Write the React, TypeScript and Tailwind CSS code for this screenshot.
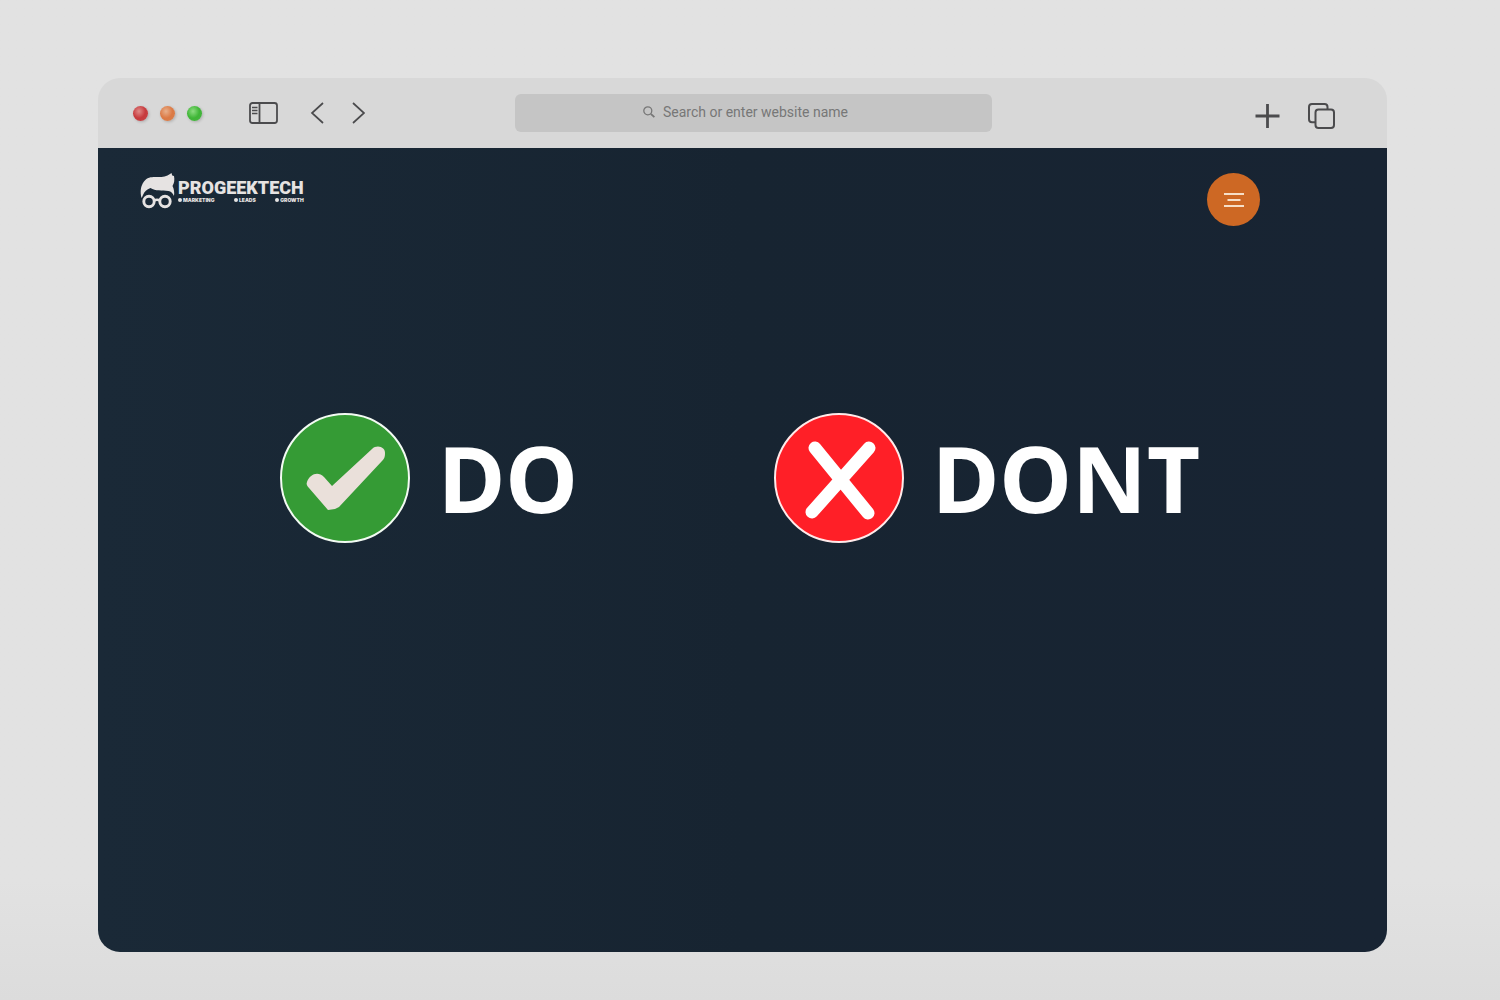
import type { ReactNode } from "react";

function TrafficLights() {
  return (
    <div className="flex gap-3">
      <button
        type="button"
        aria-label="Close"
        className="size-[15px] rounded-full bg-radial-[at_40%_35%] from-[#e08a88] via-[#c73a3d] to-[#c2494c] shadow-[1px_1px_3px_rgba(0,0,0,0.2)]"
      />
      <button
        type="button"
        aria-label="Minimize"
        className="size-[15px] rounded-full bg-radial-[at_40%_35%] from-[#e8b08c] via-[#dc7a45] to-[#d4804f] shadow-[1px_1px_3px_rgba(0,0,0,0.2)]"
      />
      <button
        type="button"
        aria-label="Zoom"
        className="size-[15px] rounded-full bg-radial-[at_40%_35%] from-[#8cdc80] via-[#3fb636] to-[#4bb046] shadow-[1px_1px_3px_rgba(0,0,0,0.2)]"
      />
    </div>
  );
}

function Toolbar() {
  return (
    <header className="flex h-[70px] items-center bg-[#d8d8d8] pr-[52px] pl-[35px] text-[#4b4b4d]">
      <TrafficLights />
      <button type="button" aria-label="Sidebar" className="ml-[46px]">
        <svg width="30" height="22" viewBox="0 0 30 22" fill="none" stroke="currentColor" strokeWidth="1.8">
          <rect x="2" y="1" width="27" height="20" rx="2.5" />
          <path d="M11.500 1v20" />
          <path d="M4 5.500h5.500M4 8.500h5.500M4 11.500h5.500" strokeWidth="1.500" />
        </svg>
      </button>
      <button type="button" aria-label="Back" className="ml-8">
        <svg width="14" height="22" viewBox="0 0 14 22" fill="none" stroke="currentColor" strokeWidth="1.7">
          <path d="M13 1 2 11l11 10" />
        </svg>
      </button>
      <button type="button" aria-label="Forward" className="ml-7">
        <svg width="14" height="22" viewBox="0 0 14 22" fill="none" stroke="currentColor" strokeWidth="1.7">
          <path d="m1 1 11 10L1 21" />
        </svg>
      </button>
      <label className="mr-[263px] ml-[149px] flex h-[38px] flex-1 items-center justify-center gap-2 rounded-md bg-[#c5c5c5] pr-4 pb-[2px] text-[#777777]">
        <svg width="12" height="12" viewBox="0 0 12 12" fill="none" stroke="currentColor" strokeWidth="1.3">
          <circle cx="4.8" cy="4.8" r="4" />
          <path d="m7.8 7.8 3.6 3.4" strokeWidth="1.8" />
        </svg>
        <input
          type="text"
          aria-label="Address"
          placeholder="Search or enter website name"
          className="field-sizing-content bg-transparent font-['Roboto',sans-serif] text-sm outline-none placeholder:text-[#777777]"
        />
      </label>
      <div className="flex gap-7 pt-[6px]">
        <button type="button" aria-label="New tab">
          <svg width="25" height="26" viewBox="0 0 25 26" fill="none" stroke="currentColor" strokeWidth="2.8">
            <path d="M12.5 1v24M.5 13h24" />
          </svg>
        </button>
        <button type="button" aria-label="Show tabs">
          <svg width="27" height="26" viewBox="0 0 27 26" fill="none" stroke="currentColor" strokeWidth="2">
            <path d="M7 19.3H4a3 3 0 0 1-3-3V4a3 3 0 0 1 3-3h12.500a3 3 0 0 1 3 3v2.500" />
            <rect x="7.500" y="6.500" width="18.500" height="18.500" rx="3" />
          </svg>
        </button>
      </div>
    </header>
  );
}

function Logo() {
  return (
    <a href="#" className="flex items-end gap-[2px] text-[#e6e3e2]">
      <svg width="36" height="36" viewBox="0 0 36 36" fill="none">
        <path
          d="M1.500 25C0 19 .5 13 4 8.500 7 4.500 11 4 15 4c5 0 11 .5 15-3l1.500-1 .7 2.500L34 3c.8 4 .2 7-1.500 10 1.500 3 2 6 1.500 10-1.500-3-3-4.500-5.500-5-7-.5-13 0-18-3-4 1.500-6 3.500-7 6-.8 1.500-1 2.500-2 4z"
          fill="currentColor"
        />
        <circle cx="9" cy="28.500" r="5.200" stroke="currentColor" strokeWidth="2.900" />
        <circle cx="25" cy="28.500" r="5.200" stroke="currentColor" strokeWidth="2.900" />
        <path d="M14 27.500q3-1.500 6 0" stroke="currentColor" strokeWidth="2.400" />
      </svg>
      <span className="flex flex-col pb-[6px]">
        <span className="font-['Roboto',sans-serif] text-lg leading-[18px] font-black">PROGEEKTECH</span>
        <span className="flex justify-between font-['Inter',sans-serif] text-[5px] leading-[6px] font-black">
          <span className="flex items-center gap-px">
            <i className="size-1 rounded-full bg-current" />
            MARKETING
          </span>
          <span className="flex items-center gap-px">
            <i className="size-1 rounded-full bg-current" />
            LEADS
          </span>
          <span className="flex items-center gap-px">
            <i className="size-1 rounded-full bg-current" />
            GROWTH
          </span>
        </span>
      </span>
    </a>
  );
}

function Choice({ label, children }: { label: string; children: ReactNode }) {
  return (
    <div className="flex items-center gap-7">
      <svg width="130" height="130" viewBox="0 0 130 130" fill="none" aria-hidden="true">
        {children}
      </svg>
      <h2 className="font-['Noto_Sans',sans-serif] text-[92px] leading-[130px] font-bold text-white">{label}</h2>
    </div>
  );
}

export default function App() {
  return (
    <div className="flex min-h-screen flex-col bg-linear-to-b from-[#e2e2e2] from-88% to-[#dcdcdc] pt-[78px] pr-[113px] pb-12 pl-[98px]">
      <div className="flex flex-1 flex-col overflow-hidden rounded-[22px]">
        <Toolbar />
        <div className="flex-1 bg-linear-to-r from-[#1a2937] via-[#172431] to-[#182433]">
          <nav className="flex items-start justify-between pt-[25px] pr-[127px] pl-[42px]">
            <Logo />
            <button
              type="button"
              aria-label="Menu"
              className="flex size-[53px] items-center justify-center rounded-full bg-[#cd6824]"
            >
              <svg width="20" height="14" viewBox="0 0 20 14" stroke="#f6dfc8" strokeWidth="1.800">
                <path d="M0 1h20M3.500 7h13M0 13h20" />
              </svg>
            </button>
          </nav>
          <main className="flex items-center justify-between pt-[187px] pr-[187px] pb-16 pl-[182px]">
            <Choice label="DO">
              <circle cx="65" cy="65" r="64" fill="#359b35" stroke="#f3fbf3" strokeWidth="2" />
              <path
                d="M27 69c3-8 11-11 17-5l8 9 40-37c5-5 14-2 13 5 0 3-1 5-3 7L59 94l-4 2-7 1-19-22c-2-2-3-4-2-6z"
                fill="#eae0da"
              />
            </Choice>
            <Choice label="DONT">
              <circle cx="65" cy="65" r="64" fill="#ff1f27" stroke="#ffeaea" strokeWidth="2" />
              <path d="m41 35 53 65M95 35l-57 64" stroke="#fff" strokeWidth="13" strokeLinecap="round" />
            </Choice>
          </main>
        </div>
      </div>
    </div>
  );
}
